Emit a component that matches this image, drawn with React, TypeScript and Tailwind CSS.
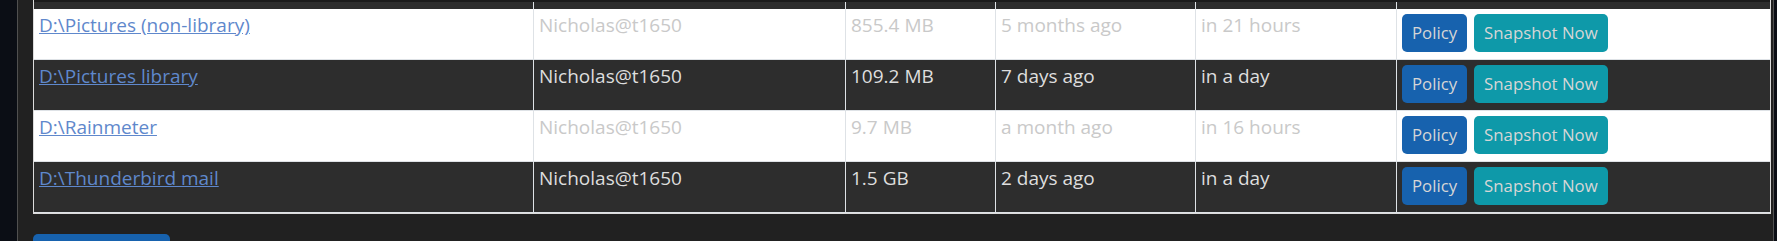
import React from "react";

type Row = {
  path: string;
  owner: string;
  size: string;
  last: string;
  next: string;
};

const rows: Row[] = [
  { path: "D:\\Pictures (non-library)", owner: "Nicholas@t1650", size: "855.4 MB", last: "5 months ago", next: "in 21 hours" },
  { path: "D:\\Pictures library", owner: "Nicholas@t1650", size: "109.2 MB", last: "7 days ago", next: "in a day" },
  { path: "D:\\Rainmeter", owner: "Nicholas@t1650", size: "9.7 MB", last: "a month ago", next: "in 16 hours" },
  { path: "D:\\Thunderbird mail", owner: "Nicholas@t1650", size: "1.5 GB", last: "2 days ago", next: "in a day" },
];

const cols = "grid grid-cols-[500px_312px_150px_200px_201px_373px]";

function SnapshotRow({ row, light }: { row: Row; light: boolean }) {
  const bg = light ? "bg-white text-[#c9c9c9]" : "bg-[#2d2d2d] text-[#dedede]";
  const cell = "border-r border-[#dee2e6] px-[5px] pt-[2px] leading-[28px]";
  return (
    <div className={`${cols} h-[51px] border-b border-[#dee2e6] ${bg}`}>
      <div className={cell}>
        <a href="#" className="text-[#5f88cc] underline">
          {row.path}
        </a>
      </div>
      <div className={cell}>{row.owner}</div>
      <div className={cell}>{row.size}</div>
      <div className={cell}>{row.last}</div>
      <div className={cell}>{row.next}</div>
      <div className="flex items-start gap-[7px] p-[5px]">
        <button className="h-[38px] rounded-[5px] bg-[#1762ae] px-[10px] text-[16.8px] text-[#d6d6d6]">
          Policy
        </button>
        <button className="h-[38px] rounded-[5px] bg-[#0e99a9] px-[10px] text-[16.8px] text-[#d6d6d6]">
          Snapshot Now
        </button>
      </div>
    </div>
  );
}

export default function App() {
  return (
    <div className="flex h-[241px] w-[1777px] overflow-hidden bg-[#212121] font-['Open_Sans',sans-serif] text-[19px]">
      <div className="w-[17px] shrink-0 bg-[#0b0e15]" />
      <div className="w-px shrink-0 bg-[#505050]" />

      <div className="flex flex-col pl-[15px] pr-[2px]">
        <div className="w-[1738px] border-x border-b border-[#dcdcdc]">
          {/* tail of the row scrolled above */}
          <div className={`${cols} h-[9px] border-t-2 border-t-[#1b1b1b] bg-[#2d2d2d]`}>
            <div className="border-r border-[#dee2e6]" />
            <div className="border-r border-[#dee2e6]" />
            <div className="border-r border-[#dee2e6]" />
            <div className="border-r border-[#dee2e6]" />
            <div className="border-r border-[#dee2e6]" />
            <div />
          </div>
          {rows.map((r, i) => (
            <SnapshotRow key={r.path} row={r} light={i % 2 === 0} />
          ))}
        </div>

        <div className="mt-[20px]">
          <button aria-label="More" className="h-[40px] w-[137px] rounded-[5px] bg-[#1762ae]" />
        </div>
      </div>

      <div className="w-px shrink-0 bg-[#505050]" />
      <div className="flex-1 bg-[#0b0e15]" />
    </div>
  );
}
